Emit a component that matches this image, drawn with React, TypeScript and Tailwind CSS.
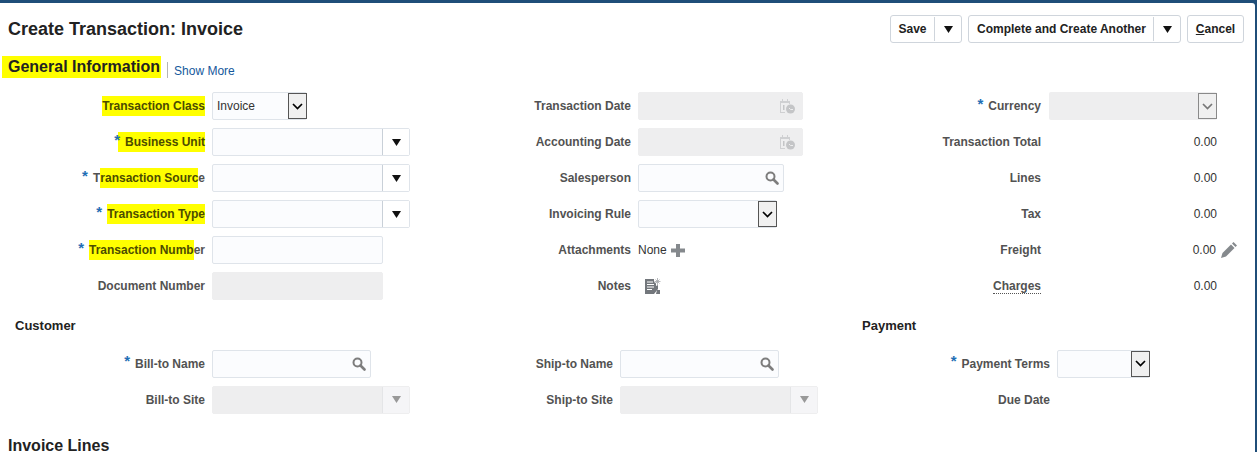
import type { ReactNode } from 'react';

// small native-looking select arrow box
function SelectBox({ dim = false }: { dim?: boolean }) {
  return (
    <span className={`-mr-px flex h-[26px] w-[19px] items-center justify-center border bg-[#f0f0f0] ${dim ? 'border-[#8a8a8a]' : 'border-[#555]'}`}>
      <svg width="11" height="7" viewBox="0 0 11 7" fill="none">
        <path d="M1 1l4.500 4.500L10 1" stroke={dim ? '#777' : '#000'} strokeWidth="1.7" />
      </svg>
    </span>
  );
}

function Caret({ dim = false }: { dim?: boolean }) {
  return (
    <svg width="9" height="7" viewBox="0 0 9 7">
      <path d="M0 0h9L4.500 7z" fill={dim ? '#999' : '#111'} />
    </svg>
  );
}

function Label({ width, req, children }: { width: string; req?: boolean; children: ReactNode }) {
  return (
    <div className={`${width} flex shrink-0 items-center justify-end text-right text-xs font-bold text-[#525252]`}>
      {req && <span className="relative -top-[3px] mr-[5px] text-[15px] leading-none font-bold text-[#1f6fb5]">*</span>}
      <span>{children}</span>
    </div>
  );
}

function Hl({ children }: { children: ReactNode }) {
  return <span className="inline-block bg-[#ffff00] leading-[20px] text-[#4c4c00]">{children}</span>;
}

function Row({ children }: { children: ReactNode }) {
  return <div className="flex h-[28px] items-center gap-[7px]">{children}</div>;
}

function Input({ width, disabled, children }: { width: string; disabled?: boolean; children?: ReactNode }) {
  return (
    <div className={`${width} flex h-[28px] items-center justify-end rounded-[2px] border ${disabled ? 'border-[#eeeeef] bg-[#eeeeef]' : 'border-[#dfe4ea] bg-[#fbfcfe]'}`}>
      {children}
    </div>
  );
}

function ComboInput({ disabled }: { disabled?: boolean }) {
  return (
    <div className={`flex h-[28px] w-[198px] shrink-0 rounded-[2px] border ${disabled ? 'border-[#eeeeef] bg-[#eeeeef]' : 'border-[#dfe4ea] bg-[#fbfcfe]'}`}>
      <div className="flex-1" />
      <div className={`flex w-[27px] items-center justify-center border-l ${disabled ? 'border-[#e4e5e7] bg-[#f5f5f7]' : 'border-[#c9d0d8] bg-white'}`}>
        <Caret dim={disabled} />
      </div>
    </div>
  );
}

function SearchIcon() {
  return (
    <svg width="14" height="14" viewBox="0 0 14 14" fill="none" className="mr-[4px]">
      <circle cx="5.500" cy="5.500" r="4" stroke="#7d7d7d" strokeWidth="2" />
      <path d="M8.500 8.500l4 4" stroke="#7d7d7d" strokeWidth="2.600" strokeLinecap="round" />
    </svg>
  );
}

function CalendarIcon() {
  return (
    <svg width="17" height="16" viewBox="0 0 17 16" className="mr-[6px]">
      <path d="M1 3h2V1h1v2h4V1h1v2h2v3h-1V5H2v9h4v1H1z" fill="#cfd0d2" />
      <path d="M4 7h1.500v5H4z" fill="#c4c5c7" />
      <circle cx="11.500" cy="11" r="4.500" fill="#c4c5c7" />
      <path d="M10 10l1.500 1.500H14" stroke="#eeeeef" strokeWidth="1" fill="none" />
    </svg>
  );
}

function Amount({ children }: { children: ReactNode }) {
  return <div className="w-[169px] text-right text-xs text-[#333]">{children}</div>;
}

const L1 = 'w-[205px]';
const L2 = 'w-[221px]';
const L3 = 'w-[231px]';
const S2 = 'w-[203px]';

export default function App() {
  return (
    <div className="h-[452px] w-[1257px] overflow-hidden bg-[#1f4e79] pt-[3px] pr-[2px] font-['Liberation_Sans',Arial,sans-serif]">
      <div className="h-full rounded-tr-[3px] bg-white">
        {/* header */}
        <div className="flex h-[40px] items-end justify-between pr-[11px]">
          <h1 className="pl-[8px] text-lg font-bold text-[#222]">Create Transaction: Invoice</h1>
          <div className="flex gap-[6px] text-xs font-bold text-[#222]">
            <div className="flex h-[28px] w-[72px] items-center rounded-[3px] border border-[#cfd5dc] bg-white">
              <span className="w-[43px] text-center">Save</span>
              <span className="flex h-[24px] flex-1 items-center justify-center border-l border-[#cfd5dc]"><Caret /></span>
            </div>
            <div className="flex h-[28px] w-[213px] items-center rounded-[3px] border border-[#cfd5dc] bg-white">
              <span className="w-[184px] pl-[1px] text-center">Complete and Create Another</span>
              <span className="flex h-[24px] flex-1 items-center justify-center border-l border-[#cfd5dc]"><Caret /></span>
            </div>
            <div className="flex h-[28px] w-[57px] items-center justify-center rounded-[3px] border border-[#cfd5dc] bg-white">
              <span><span className="underline">C</span>ancel</span>
            </div>
          </div>
        </div>

        {/* section title */}
        <div className="mt-[11px] flex h-[26px] items-center">
          <h2 className="ml-[2px] bg-[#ffff00] pr-[1px] pl-[6px] text-base leading-[22px] font-bold text-[#222]">General Information</h2>
          <span className="mt-[6px] ml-[6px] h-[16px] border-l border-[#b5b5b5]" />
          <a className="mt-[8px] ml-[6px] text-xs text-[#15589c]">Show More</a>
        </div>

        {/* three columns */}
        <div className="mt-[12px] flex">
          <div className="flex w-[410px] shrink-0 flex-col gap-[8px]">
            <Row>
              <Label width={L1}><Hl>Transaction Class</Hl></Label>
              <div className="flex h-[28px] w-[95px] items-center justify-between rounded-[2px] border border-[#dfe4ea] bg-[#fbfcfe] pl-[4px] text-xs text-[#333]">
                Invoice
                <SelectBox />
              </div>
            </Row>
            <Row>
              <Label width={L1} req>
                <span className="-ml-[7px] inline-block bg-[#ffff00] pl-[7px] leading-[20px] text-[#4c4c00]">Business Unit</span>
              </Label>
              <ComboInput />
            </Row>
            <Row><Label width={L1} req>T<Hl>ransaction Sourc</Hl>e</Label><ComboInput /></Row>
            <Row><Label width={L1} req><Hl>Transaction Type</Hl></Label><ComboInput /></Row>
            <Row><Label width={L1} req><Hl>Transaction Numb</Hl>er</Label><Input width="w-[171px]" /></Row>
            <Row><Label width={L1}>Document Number</Label><Input width="w-[171px]" disabled /></Row>
          </div>

          <div className="flex w-[400px] shrink-0 flex-col gap-[8px]">
            <Row><Label width={L2}>Transaction Date</Label><Input width="w-[165px]" disabled><CalendarIcon /></Input></Row>
            <Row><Label width={L2}>Accounting Date</Label><Input width="w-[165px]" disabled><CalendarIcon /></Input></Row>
            <Row><Label width={L2}>Salesperson</Label><Input width="w-[146px]"><SearchIcon /></Input></Row>
            <Row>
              <Label width={L2}>Invoicing Rule</Label>
              <div className="flex h-[28px] w-[139px] items-center justify-end rounded-[2px] border border-[#dfe4ea] bg-[#fbfcfe]"><SelectBox /></div>
            </Row>
            <Row>
              <Label width={L2}>Attachments</Label>
              <span className="text-xs text-[#333]">None</span>
              <svg width="14" height="13" viewBox="0 0 14 13" className="-ml-[3px]">
                <path d="M5 0h4v4.500h5v4H9V13H5V8.500H0v-4h5z" fill="#85898d" />
              </svg>
            </Row>
            <Row>
              <Label width={L2}>Notes</Label>
              <svg width="16" height="16" viewBox="0 0 16 16" className="ml-[7px]">
                <path d="M0 1h9v3l2 1v3l2-1v4l-4 5H0z" fill="#73777c" />
                <path d="M2 4h6M2 6.500h7M2 9h7M2 11.500h5" stroke="#fff" strokeWidth="1" />
                <path d="M12.500 0v7M9.500 3.500h6M10.500 1.500l4 4M14.500 1.500l-4 4" stroke="#a3a6aa" strokeWidth="0.8" />
                <path d="M12 12h3v4h-4z" fill="#73777c" />
              </svg>
            </Row>
          </div>

          <div className="flex flex-col gap-[8px]">
            <Row>
              <Label width={L3} req>Currency</Label>
              <div className="ml-[1px] flex h-[28px] w-[168px] items-center justify-end rounded-[2px] bg-[#eeeeef] pr-px"><SelectBox dim /></div>
            </Row>
            <Row><Label width={L3}>Transaction Total</Label><Amount>0.00</Amount></Row>
            <Row><Label width={L3}>Lines</Label><Amount>0.00</Amount></Row>
            <Row><Label width={L3}>Tax</Label><Amount>0.00</Amount></Row>
            <Row>
              <Label width={L3}>Freight</Label>
              <div className="w-[168px] text-right text-xs text-[#333]">0.00</div>
              <svg width="16" height="16" viewBox="0 0 16 16" className="-ml-[2px]">
                <path d="M0 16l1.500-5L10 2.500l3.500 3.500L5 14.500z" fill="#85898d" />
                <path d="M11 1.500L12.500 0 16 3.500 14.500 5z" fill="#85898d" />
              </svg>
            </Row>
            <Row>
              <Label width={L3}><span className="border-b border-dotted border-[#555]">Charges</span></Label>
              <Amount>0.00</Amount>
            </Row>
          </div>
        </div>

        {/* customer and payment */}
        <div className="mt-[16px] flex">
          <div className="w-[862px] shrink-0 pl-[15px] text-[13px] font-bold text-[#222]">Customer</div>
          <div className="text-[13px] font-bold text-[#222]">Payment</div>
        </div>
        <div className="mt-[14px] flex">
          <div className="flex w-[410px] shrink-0 flex-col gap-[8px]">
            <Row><Label width={L1} req>Bill-to Name</Label><Input width="w-[159px]"><SearchIcon /></Input></Row>
            <Row><Label width={L1}>Bill-to Site</Label><ComboInput disabled /></Row>
          </div>
          <div className="flex w-[409px] shrink-0 flex-col gap-[8px]">
            <Row><Label width={S2}>Ship-to Name</Label><Input width="w-[159px]"><SearchIcon /></Input></Row>
            <Row><Label width={S2}>Ship-to Site</Label><ComboInput disabled /></Row>
          </div>
          <div className="flex flex-col gap-[8px]">
            <Row>
              <Label width={L3} req>Payment Terms</Label>
              <div className="flex h-[28px] w-[93px] items-center justify-end rounded-[2px] border border-[#dfe4ea] bg-[#fbfcfe]"><SelectBox /></div>
            </Row>
            <Row><Label width={L3}>Due Date</Label></Row>
          </div>
        </div>

        <h2 className="mt-[26px] pl-[8px] text-base leading-[12px] font-bold text-[#222]">Invoice Lines</h2>
      </div>
    </div>
  );
}
